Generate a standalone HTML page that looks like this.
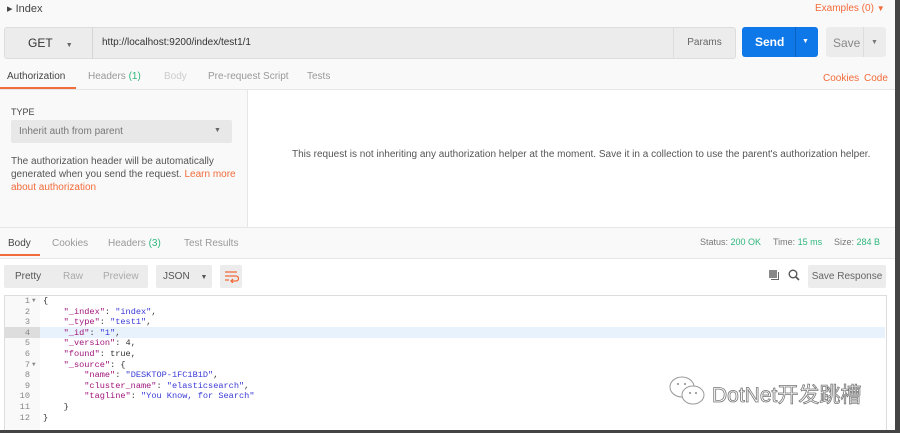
<!DOCTYPE html>
<html><head><style>
body{margin:0;width:900px;height:433px;overflow:hidden;background:#fff;font-family:"Liberation Sans",sans-serif;font-size:10px;color:#505050;position:relative}
.a{position:absolute}
.code{font-family:"Liberation Mono",monospace;font-size:8.6px;line-height:10.6px}
.k{color:#a0157a}.s{color:#3a3ad6}
</style></head><body>
<div class="a" style="left:0;top:0;width:895px;height:227px;background:#f9f9f9"></div>
<div class="a" style="left:0;top:227px;width:895px;height:30px;background:#f9f9f9;border-top:1px solid #e6e6e6;border-bottom:1px solid #e6e6e6"></div>
<div class="a" style="left:7px;top:2px;font-size:11px;color:#444">▸ Index</div>
<div class="a" style="left:815px;top:3px;color:#f26b3a">Examples (0) <span style="font-size:8px">▼</span></div>
<div class="a" style="left:4px;top:27px;width:131px;height:30px;background:#ececec;border:1px solid #ddd;border-radius:3px 0 0 3px"></div>
<div class="a" style="left:28px;top:36px;font-size:12px;color:#333">GET <span style="font-size:7px;margin-left:10px;color:#666">▼</span></div>
<div class="a" style="left:92px;top:27px;width:580px;height:30px;background:#ececec;border:1px solid #ddd;border-left:1px solid #d5d5d5"></div>
<div class="a" style="left:102px;top:37px;color:#333">http://localhost:9200/index/test1/1</div>
<div class="a" style="left:673px;top:27px;width:61px;height:30px;background:#ececec;border:1px solid #ddd;border-radius:0 3px 3px 0;text-align:center;line-height:30px;color:#666">Params</div>
<div class="a" style="left:742px;top:27px;width:76px;height:30px;background:#0e78e8;border-radius:3px"></div>
<div class="a" style="left:795px;top:27px;width:1px;height:30px;background:#0a63c2"></div>
<div class="a" style="left:755px;top:35px;color:#fff;font-weight:bold;font-size:12px">Send</div>
<div class="a" style="left:802px;top:38px;color:#fff;font-size:7px">▼</div>
<div class="a" style="left:826px;top:27px;width:60px;height:30px;background:#ececec;border-radius:3px"></div>
<div class="a" style="left:863px;top:27px;width:1px;height:30px;background:#ddd"></div>
<div class="a" style="left:833px;top:36px;color:#888;font-size:12px">Save</div>
<div class="a" style="left:871px;top:39px;color:#777;font-size:7px">▼</div>
<div class="a" style="left:0;top:89px;width:895px;height:1px;background:#e6e6e6"></div>
<div class="a" style="left:7px;top:71px;color:#444">Authorization</div>
<div class="a" style="left:0;top:87px;width:76px;height:2px;background:#f26b3a"></div>
<div class="a" style="left:88px;top:71px;color:#999">Headers <span style="color:#2fb67d">(1)</span></div>
<div class="a" style="left:164px;top:71px;color:#ccc">Body</div>
<div class="a" style="left:208px;top:71px;color:#999">Pre-request Script</div>
<div class="a" style="left:307px;top:71px;color:#999">Tests</div>
<div class="a" style="left:823px;top:73px;color:#f26b3a">Cookies</div>
<div class="a" style="left:864px;top:73px;color:#f26b3a">Code</div>
<div class="a" style="left:247px;top:90px;width:648px;height:137px;background:#fff"></div>
<div class="a" style="left:247px;top:90px;width:1px;height:137px;background:#e6e6e6"></div>
<div class="a" style="left:11px;top:107px;font-size:9px;color:#444">TYPE</div>
<div class="a" style="left:11px;top:120px;width:221px;height:23px;background:#e8e8e8;border-radius:2px"></div>
<div class="a" style="left:19px;top:126px;color:#777">Inherit auth from parent</div>
<div class="a" style="left:214px;top:127px;color:#666;font-size:7px">▼</div>
<div class="a" style="left:11px;top:155px;width:230px;line-height:13px;color:#555">The authorization header will be automatically generated when you send the request. <span style="color:#f26b3a">Learn more about authorization</span></div>
<div class="a" style="left:292px;top:149px;color:#555">This request is not inheriting any authorization helper at the moment. Save it in a collection to use the parent's authorization helper.</div>
<div class="a" style="left:8px;top:238px;color:#444">Body</div>
<div class="a" style="left:0;top:254px;width:40px;height:2px;background:#f26b3a"></div>
<div class="a" style="left:52px;top:238px;color:#999">Cookies</div>
<div class="a" style="left:108px;top:238px;color:#999">Headers <span style="color:#2fb67d">(3)</span></div>
<div class="a" style="left:184px;top:238px;color:#999">Test Results</div>
<div class="a" style="left:700px;top:237px;font-size:9px;color:#777">Status: <span style="color:#2fb67d">200 OK</span></div>
<div class="a" style="left:773px;top:237px;font-size:9px;color:#777">Time: <span style="color:#2fb67d">15 ms</span></div>
<div class="a" style="left:834px;top:237px;font-size:9px;color:#777">Size: <span style="color:#2fb67d">284 B</span></div>
<div class="a" style="left:4px;top:265px;width:144px;height:23px;background:#ececec;border-radius:2px"></div>
<div class="a" style="left:15px;top:271px;color:#555">Pretty</div>
<div class="a" style="left:63px;top:271px;color:#aaa">Raw</div>
<div class="a" style="left:103px;top:271px;color:#aaa">Preview</div>
<div class="a" style="left:156px;top:265px;width:56px;height:23px;background:#ececec;border-radius:2px"></div>
<div class="a" style="left:163px;top:271px;color:#555">JSON <span style="font-size:7px;margin-left:8px">▼</span></div>
<div class="a" style="left:220px;top:265px;width:22px;height:23px;background:#ececec;border-radius:2px"></div>
<svg class="a" style="left:224px;top:269px" width="15" height="14"><path d="M1 3H13M1 7H12a2.5 2.5 0 0 1 0 5H8M1 11H5M9 10l-2 2 2 2" stroke="#f26b3a" fill="none" stroke-width="1.3"/></svg>
<div class="a" style="left:771px;top:272px;width:8px;height:8px;background:#666"></div>
<div class="a" style="left:768px;top:269px;width:8px;height:8px;background:#888;border:1px solid #fff"></div>
<svg class="a" style="left:788px;top:269px" width="12" height="12"><circle cx="5" cy="5" r="3.8" stroke="#555" stroke-width="1.4" fill="none"/><path d="M8 8l3 3" stroke="#555" stroke-width="1.6"/></svg>
<div class="a" style="left:808px;top:265px;width:78px;height:23px;background:#ececec;border-radius:2px;text-align:center;line-height:23px;color:#666">Save Response</div>
<div class="a" style="left:4px;top:295px;width:881px;height:135px;border:1px solid #ddd;border-bottom:none;background:#fff"></div>
<div class="a" style="left:5px;top:296px;width:35px;height:134px;background:#f9f9f9"></div>
<div class="a" style="left:5px;top:327px;width:880px;height:11px;background:#e8f2fd"></div>
<div class="a" style="left:5px;top:327px;width:35px;height:11px;background:#ddd"></div>
<div class="a code" style="left:6px;top:296px;width:24px;text-align:right;color:#888">1<br>2<br>3<br>4<br>5<br>6<br>7<br>8<br>9<br>10<br>11<br>12</div>
<div class="a code" style="left:32px;top:296px;color:#888;font-size:6px;line-height:10.6px">▼<br><br><br><br><br><br>▼</div>
<pre class="a code" style="left:43px;top:296px;margin:0;color:#333">{
    <span class="k">"_index"</span>: <span class="s">"index"</span>,
    <span class="k">"_type"</span>: <span class="s">"test1"</span>,
    <span class="k">"_id"</span>: <span class="s">"1"</span>,
    <span class="k">"_version"</span>: 4,
    <span class="k">"found"</span>: true,
    <span class="k">"_source"</span>: {
        <span class="k">"name"</span>: <span class="s">"DESKTOP-1FC1B1D"</span>,
        <span class="k">"cluster_name"</span>: <span class="s">"elasticsearch"</span>,
        <span class="k">"tagline"</span>: <span class="s">"You Know, for Search"</span>
    }
}</pre>
<svg class="a" style="left:668px;top:375px" width="40" height="32"><ellipse cx="14" cy="12" rx="12" ry="10" fill="#fff" stroke="#999"/><ellipse cx="25" cy="20" rx="11" ry="9" fill="#fff" stroke="#999"/><circle cx="10" cy="9" r="1" fill="#888"/><circle cx="17" cy="9" r="1" fill="#888"/><circle cx="22" cy="18" r="1" fill="#888"/><circle cx="28" cy="18" r="1" fill="#888"/></svg>
<div class="a" style="left:712px;top:379px;font-size:21px;color:#fff;-webkit-text-stroke:0.8px #777;font-family:'Liberation Sans','Noto Sans CJK SC',sans-serif">DotNet开发跳槽</div>
<div class="a" style="left:895px;top:0;width:5px;height:433px;background:#444"></div>
<div class="a" style="left:0;top:430px;width:900px;height:3px;background:#444"></div>
</body></html>
